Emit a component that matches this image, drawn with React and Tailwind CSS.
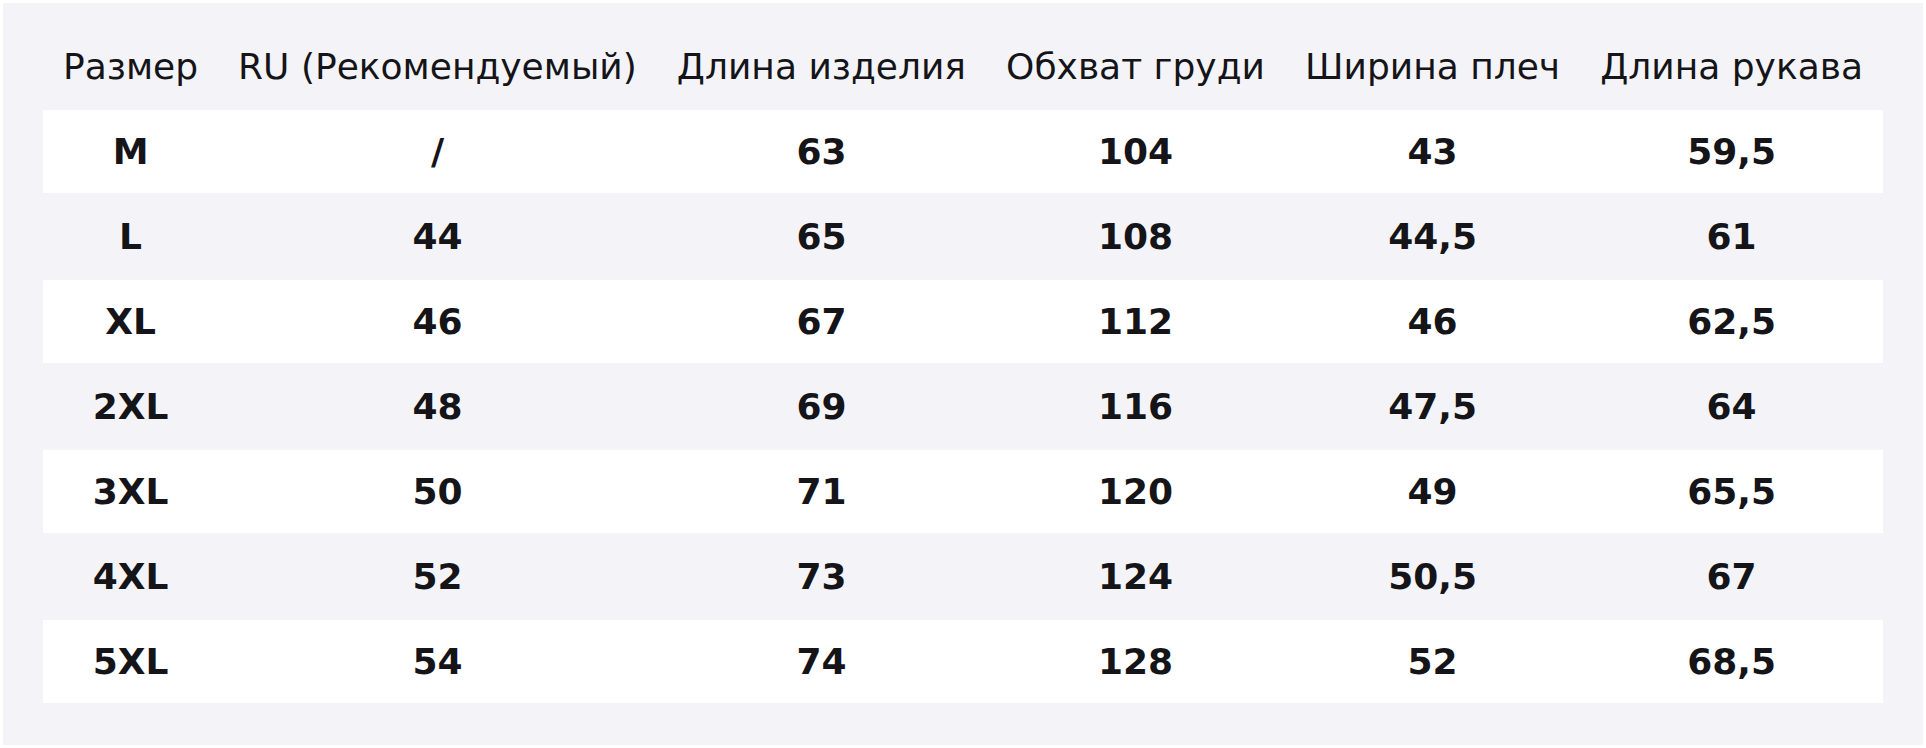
const headers = [
  'Размер',
  'RU (Рекомендуемый)',
  'Длина изделия',
  'Обхват груди',
  'Ширина плеч',
  'Длина рукава',
];

const rows = [
  ['M', '/', '63', '104', '43', '59,5'],
  ['L', '44', '65', '108', '44,5', '61'],
  ['XL', '46', '67', '112', '46', '62,5'],
  ['2XL', '48', '69', '116', '47,5', '64'],
  ['3XL', '50', '71', '120', '49', '65,5'],
  ['4XL', '52', '73', '124', '50,5', '67'],
  ['5XL', '54', '74', '128', '52', '68,5'],
];

export default function App() {
  return (
    <div className="bg-white p-[3px] w-[1926px] h-[748px]">
      <div
        className="bg-[#f4f4f8] w-[1920px] h-[742px] px-[40px] pt-[42px] text-[#141419]"
        style={{ fontFamily: '"DejaVu Sans", Verdana, sans-serif' }}
      >
        <div className="grid grid-cols-[repeat(6,auto)] gap-y-[2px]">
          {headers.map((h) => (
            <div
              key={h}
              className="px-[20px] pb-[20px] text-center text-[36px] leading-[43px] whitespace-nowrap"
            >
              {h}
            </div>
          ))}
          {rows.map((row, i) =>
            row.map((cell, j) => (
              <div
                key={`${i}-${j}`}
                className={`h-[83px] px-[20px] flex items-center justify-center text-[36px] font-bold whitespace-nowrap ${
                  i % 2 === 0 ? 'bg-white' : 'bg-[#f4f4f8]'
                }`}
              >
                {cell}
              </div>
            ))
          )}
        </div>
      </div>
    </div>
  );
}
